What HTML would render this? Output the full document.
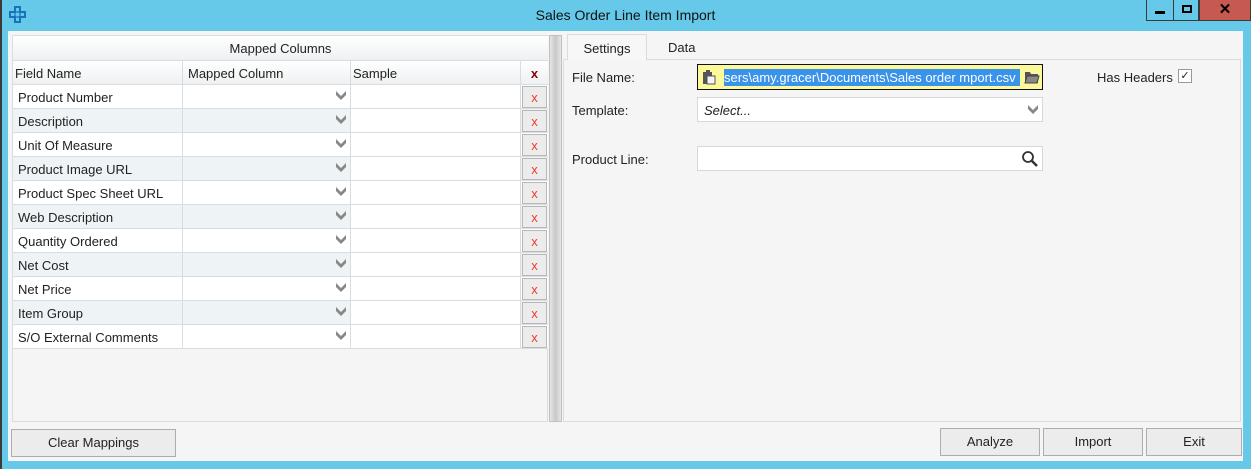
<!DOCTYPE html>
<html><head><meta charset="utf-8"><style>
*{box-sizing:border-box;margin:0;padding:0}
body{width:1251px;height:469px;background:#66c9ea;font-family:"Liberation Sans",sans-serif;font-size:13px;color:#222;position:relative;overflow:hidden}
.abs{position:absolute}
.title{left:0;top:0;width:1251px;height:31px;text-align:center;line-height:31px;font-size:14px;color:#111}
.content{left:8px;top:31px;width:1235px;height:430px;background:#f5f5f5}
.grid{left:12px;top:35px;width:536px;height:387px;border:1px solid #d8dde2;background:#f5f5f5}
.hdr{left:0;top:0;width:535px;height:25px;background:linear-gradient(#fff,#eef0f2);border-bottom:1px solid #d8dde2;text-align:center;line-height:25px}
.row{position:absolute;left:0;width:535px;height:24px;border-bottom:1px solid #d8dde2}
.c{position:absolute;top:0;height:23px;line-height:25px;padding-left:5px;border-right:1px solid #d8dde2;white-space:nowrap}
.chev{position:absolute;left:153px;top:6px}
.xb{position:absolute;left:509px;top:1px;width:25px;height:22px;border:1px solid #b8b8b8;background:#ececec;color:#f03a2a;text-align:center;line-height:21px;font-size:13px}
.btn{position:absolute;height:28px;border:1px solid #adadad;background:#ececec;text-align:center;line-height:26px;font-size:13px}
.inp{position:absolute;background:#fff;border:1px solid #d0d8e0;height:25px}
</style></head><body>
<div class="abs" style="left:0;top:0;width:2px;height:469px;background:#3a3a3a"></div>
<svg class="abs" style="left:9px;top:6px" width="18" height="18" viewBox="0 0 18 18" fill="none" stroke="#1a72b8" stroke-width="2"><path d="M6 1h5v5h5v5h-5v5h-5v-5h-5v-5h5z"/><path d="M6 6h5v5h-5z" stroke-width="1.2"/></svg>
<div class="abs title">Sales Order Line Item Import</div>
<div class="abs" style="left:1146px;top:0;width:105px;height:21px;">
 <div class="abs" style="left:0;top:0;width:28px;height:21px;border:1px solid #3a3a3a;border-top:none"><div class="abs" style="left:8px;top:11px;width:10px;height:3px;background:#000"></div></div>
 <div class="abs" style="left:27px;top:0;width:26px;height:21px;border:1px solid #3a3a3a;border-top:none"><div class="abs" style="left:8px;top:5px;width:10px;height:8px;border:2px solid #000"></div></div>
 <div class="abs" style="left:53px;top:0;width:52px;height:21px;background:#c75a50;border:1px solid #3a3a3a;border-top:none;text-align:center;font-weight:bold;font-size:15px;line-height:19px;color:#000">✕</div>
</div>
<div class="abs content"></div>
<div class="abs grid">
 <div class="abs hdr">Mapped Columns</div>
 <div class="row" style="top:25px;background:linear-gradient(#fff,#eef0f2)">
  <div class="c" style="left:0;width:170px;padding-left:2px">Field Name</div>
  <div class="c" style="left:170px;width:168px">Mapped Column</div>
  <div class="c" style="left:338px;width:170px;padding-left:2px">Sample</div>
  <div class="c" style="left:508px;width:27px;border:none;color:#8b0000;font-weight:bold;padding:0;text-align:center">x</div>
 </div>
 <div id="rows"></div>
</div>
<div class="abs" style="left:549px;top:35px;width:13px;height:387px;background:linear-gradient(90deg,#e6e6e6,#c8c8c8,#e6e6e6);border:1px solid #c0c0c0"></div>
<div class="abs" style="left:563px;top:59px;width:678px;height:363px;border:1px solid #d8dde2;background:#f5f5f5"></div>
<div class="abs" style="left:567px;top:34px;width:80px;height:26px;border:1px solid #d8dde2;border-bottom:none;background:#f7f7f7;text-align:center;line-height:27px;font-size:13px">Settings</div>
<div class="abs" style="left:668px;top:34px;height:26px;line-height:27px;font-size:13px">Data</div>
<div class="abs" style="left:572px;top:70px">File Name:</div>
<div class="abs" style="left:572px;top:103px">Template:</div>
<div class="abs" style="left:572px;top:152px">Product Line:</div>
<div class="abs" style="left:697px;top:64px;width:346px;height:26px;border:1px solid #111;background:#fbf99a">
 <svg class="abs" style="left:4px;top:4px" width="14" height="16" viewBox="0 0 14 16"><rect x="1" y="3" width="9" height="12" fill="#555"/><rect x="4" y="1" width="4" height="3" fill="#555"/><rect x="5" y="7" width="8" height="8" fill="#f4f4f4" stroke="#555"/></svg>
 <div class="abs" style="left:26px;top:4px;width:296px;height:17px;background:#3a93ea;color:#fff;line-height:17px;font-size:13px;overflow:hidden;white-space:nowrap">sers\amy.gracer\Documents\Sales order mport.csv</div>
 <svg class="abs" style="left:326px;top:5px" width="16" height="14" viewBox="0 0 16 14"><path d="M1 2h5l1 2h7v9H1z" fill="#555"/><path d="M3 6h12l-2 7H1z" fill="#888" stroke="#444"/></svg>
</div>
<div class="abs" style="left:1097px;top:70px">Has Headers</div>
<div class="abs" style="left:1178px;top:69px;width:14px;height:14px;border:1px solid #999;background:#fff;font-size:11px;line-height:12px;text-align:center">✓</div>
<div class="inp" style="left:697px;top:97px;width:346px"><div class="abs" style="left:6px;top:5px;font-style:italic">Select...</div><svg class="abs" style="left:330px;top:7px" width="10" height="9" viewBox="0 0 10 9"><path d="M0 0l5 5 5-5v4l-5 5-5-5z" fill="#888"/></svg></div>
<div class="inp" style="left:697px;top:146px;width:346px"><svg class="abs" style="left:323px;top:3px" width="18" height="18" viewBox="0 0 18 18" fill="none" stroke="#333" stroke-width="1.8"><circle cx="7" cy="7" r="5"/><path d="M11 11l5 5" stroke-width="2.5"/></svg></div>
<div class="btn" style="left:11px;top:429px;width:165px">Clear Mappings</div>
<div class="btn" style="left:940px;top:428px;width:100px">Analyze</div>
<div class="btn" style="left:1043px;top:428px;width:100px">Import</div>
<div class="btn" style="left:1146px;top:428px;width:96px">Exit</div>
<script>
var n=["Product Number","Description","Unit Of Measure","Product Image URL","Product Spec Sheet URL","Web Description","Quantity Ordered","Net Cost","Net Price","Item Group","S/O External Comments"],h="";
n.forEach(function(t,i){var bg=i%2?"#eef3f6":"#fff";h+='<div class="row" style="top:'+(49+i*24)+'px;background:'+bg+'"><div class="c" style="left:0;width:170px">'+t+'</div><div class="c" style="left:170px;width:168px"><svg class="chev" width="10" height="9" viewBox="0 0 10 9"><path d="M0 0l5 5 5-5v4l-5 5-5-5z" fill="#888"/></svg></div><div class="c" style="left:338px;width:170px;background:#fff"></div><div class="xb">x</div></div>'});
document.getElementById("rows").innerHTML=h;
</script>
</body></html>
